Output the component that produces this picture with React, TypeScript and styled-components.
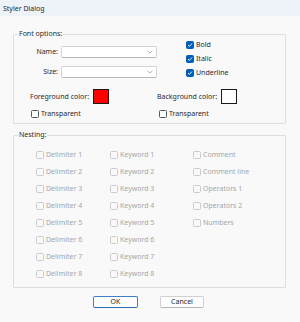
import styled, { createGlobalStyle } from "styled-components";

const GlobalStyle = createGlobalStyle`
  html, body {
    margin: 0;
    padding: 0;
    background: #f9f9f9;
  }
  body {
    font-family: "Noto Sans", "Liberation Sans", sans-serif;
    font-size: 7px;
    color: #2a2a2a;
  }
`;

const Window = styled.div`
  width: 300px;
  height: 322px;
  display: flex;
  flex-direction: column;
  background: #f9f9f9;
  overflow: hidden;
`;

const TitleBar = styled.div`
  height: 16px;
  display: flex;
  align-items: center;
  padding-left: 3px;
  background: #eef2f9;
  font-size: 7px;
  color: #2a2a2a;
`;

const Group = styled.fieldset<{ $top: number; $pad: string }>`
  margin: ${(p) => p.$top}px 14px 0 13px;
  padding: ${(p) => p.$pad};
  border: 1px solid #dedede;
  border-radius: 1px;
  min-width: 0;
`;

const Legend = styled.legend`
  margin-left: 4px;
  padding: 0 1px;
  font-size: 7px;
  line-height: 10px;
  height: 10px;
`;

// Font options
const TopRow = styled.div`
  display: flex;
  align-items: flex-start;
`;

const Fields = styled.div`
  margin-top: 7px;
  display: grid;
  grid-template-columns: 44px 96px;
  column-gap: 3px;
  row-gap: 8px;
  align-items: center;
`;

const FieldLabel = styled.span`
  text-align: right;
  line-height: 12px;
`;

const Combo = styled.div`
  height: 12px;
  box-sizing: border-box;
  border: 1px solid #d4d4d4;
  border-bottom-color: #b8b8b8;
  border-radius: 2px;
  background: #fff;
  display: flex;
  align-items: center;
  justify-content: flex-end;
  padding-right: 3px;
`;

const StyleChecks = styled.div`
  margin-left: 29px;
  margin-top: 2px;
  display: flex;
  flex-direction: column;
  gap: 6px;
`;

const ColorGrid = styled.div`
  margin-top: 11px;
  padding-left: 16px;
  display: grid;
  grid-template-columns: 127px auto;
  row-gap: 6px;
`;

const ColorRow = styled.div`
  display: flex;
  align-items: center;
  gap: 4px;
`;

const Swatch = styled.div<{ $color: string }>`
  width: 16px;
  height: 15px;
  box-sizing: border-box;
  border: 1px solid #1a1a1a;
  background: ${(p) => p.$color};
`;

const Indent = styled.div<{ $x: number }>`
  padding-left: ${(p) => p.$x}px;
`;

// Checkbox
const CheckRow = styled.label<{ $disabled?: boolean }>`
  display: flex;
  align-items: center;
  gap: 2px;
  height: 8px;
  line-height: 8px;
  color: ${(p) => (p.$disabled ? "#a6a6a6" : "#2a2a2a")};
  white-space: nowrap;
`;

const Box = styled.span<{ $checked?: boolean; $disabled?: boolean }>`
  width: 8px;
  height: 8px;
  box-sizing: border-box;
  border-radius: 1.5px;
  flex: none;
  display: flex;
  align-items: center;
  justify-content: center;
  border: 1px solid
    ${(p) => (p.$checked ? "#005fb8" : p.$disabled ? "#cbcbcb" : "#5a5a5a")};
  background: ${(p) => (p.$checked ? "#005fb8" : p.$disabled ? "#f9f9f9" : "#fdfdfd")};
`;

function Check({
  label,
  checked,
  disabled,
}: {
  label: string;
  checked?: boolean;
  disabled?: boolean;
}) {
  return (
    <CheckRow $disabled={disabled}>
      <Box $checked={checked} $disabled={disabled}>
        {checked && (
          <svg width="6" height="6" viewBox="0 0 6 6">
            <path d="M1 3.1 L2.4 4.4 L5 1.5" fill="none" stroke="#fff" strokeWidth="0.9" />
          </svg>
        )}
      </Box>
      {label}
    </CheckRow>
  );
}

function Chevron() {
  return (
    <svg width="6" height="4" viewBox="0 0 6 4">
      <path d="M0.6 0.8 L3 3.1 L5.4 0.8" fill="none" stroke="#8a8a8a" strokeWidth="0.7" />
    </svg>
  );
}

// Nesting
const NestGrid = styled.div`
  padding-left: 22px;
  display: grid;
  grid-template-columns: 74px 83px auto;
  grid-auto-flow: column;
  grid-template-rows: repeat(8, 17px);
  align-items: center;
`;

const nesting = [
  "Delimiter 1",
  "Delimiter 2",
  "Delimiter 3",
  "Delimiter 4",
  "Delimiter 5",
  "Delimiter 6",
  "Delimiter 7",
  "Delimiter 8",
  "Keyword 1",
  "Keyword 2",
  "Keyword 3",
  "Keyword 4",
  "Keyword 5",
  "Keyword 6",
  "Keyword 7",
  "Keyword 8",
  "Comment",
  "Comment line",
  "Operators 1",
  "Operators 2",
  "Numbers",
];

// Buttons
const Buttons = styled.div`
  margin-top: 8px;
  display: flex;
  justify-content: center;
  gap: 22px;
  padding-right: 3px;
`;

const Button = styled.button<{ $primary?: boolean }>`
  width: ${(p) => (p.$primary ? 45 : 44)}px;
  height: 12px;
  padding: 0;
  box-sizing: border-box;
  font-family: inherit;
  font-size: 7px;
  line-height: 10px;
  color: #2a2a2a;
  background: #fdfdfd;
  border-radius: 2px;
  border: 1px solid ${(p) => (p.$primary ? "#3c7fc4" : "#d0d0d0")};
  border-bottom-color: ${(p) => (p.$primary ? "#2a6cb3" : "#b5b5b5")};
`;

export default function App() {
  return (
    <Window>
      <GlobalStyle />
      <TitleBar>Styler Dialog</TitleBar>

      <Group $top={13} $pad="0 0 5px 0">
        <Legend>Font options:</Legend>
        <TopRow>
          <Fields>
            <FieldLabel>Name:</FieldLabel>
            <Combo>
              <Chevron />
            </Combo>
            <FieldLabel>Size:</FieldLabel>
            <Combo>
              <Chevron />
            </Combo>
          </Fields>
          <StyleChecks>
            <Check label="Bold" checked />
            <Check label="Italic" checked />
            <Check label="Underline" checked />
          </StyleChecks>
        </TopRow>
        <ColorGrid>
          <ColorRow>
            Foreground color:
            <Swatch $color="#ff0000" />
          </ColorRow>
          <ColorRow>
            Background color:
            <Swatch $color="#ffffff" />
          </ColorRow>
          <Indent $x={1}>
            <Check label="Transparent" />
          </Indent>
          <Indent $x={2}>
            <Check label="Transparent" />
          </Indent>
        </ColorGrid>
      </Group>

      <Group $top={6} $pad="6px 0 5px 0">
        <Legend>Nesting:</Legend>
        <NestGrid>
          {nesting.map((n) => (
            <Check key={n} label={n} disabled />
          ))}
        </NestGrid>
      </Group>

      <Buttons>
        <Button $primary>OK</Button>
        <Button>Cancel</Button>
      </Buttons>
    </Window>
  );
}
